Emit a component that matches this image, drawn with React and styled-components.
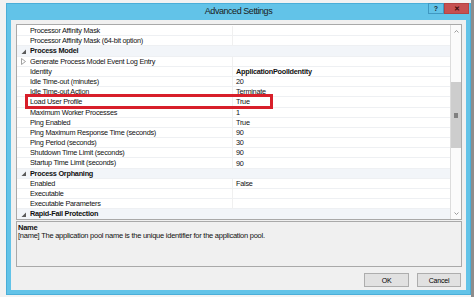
import React from 'react';
import styled, { createGlobalStyle } from 'styled-components';

const GlobalStyle = createGlobalStyle`
  html, body {
    margin: 0;
    padding: 0;
  }
  body {
    font-family: "Liberation Sans", Arial, sans-serif;
    color: #000;
  }
`;

const Page = styled.div`
  width: 474px;
  height: 297px;
  box-sizing: border-box;
  padding: 3px 0 0 6px;
  background: linear-gradient(to right, #f2f2f2 0, #f2f2f2 471px, #8d8d8d 471px);
  overflow: hidden;
`;

const Window = styled.div`
  width: 465px;
  height: 292px;
  box-sizing: border-box;
  display: flex;
  flex-direction: column;
  padding: 0 4px 4px 4px;
  background: #62c3e8;
  border: 1px solid #4aaed8;
`;

const TitleBar = styled.div`
  height: 16px;
  margin: 0 -4px;
  display: grid;
  grid-template-columns: 1fr auto 1fr;
  align-items: start;
`;

const Title = styled.div`
  grid-column: 2;
  font-size: 9px;
  letter-spacing: -0.45px;
  line-height: 15px;
  color: #1b1b1b;
`;

const Controls = styled.div`
  grid-column: 3;
  justify-self: end;
  display: flex;
  margin: -1px 1px 0 0;
`;

const CaptionButton = styled.div`
  height: 11px;
  width: ${(p) => p.$w}px;
  box-sizing: border-box;
  display: flex;
  align-items: center;
  justify-content: center;
  font-size: 7px;
  font-weight: bold;
  background: ${(p) => (p.$close ? '#c75050' : '#62c3e8')};
  border: 1px solid ${(p) => (p.$close ? '#b44444' : '#3f98c2')};
  color: ${(p) => (p.$close ? '#3a0d0d' : '#1b2a33')};
`;

const Client = styled.div`
  flex: 1;
  display: flex;
  flex-direction: column;
  padding: 4px 4px 3px 5px;
  background: #f0f0f0;
`;

const Grid = styled.div`
  position: relative;
  height: 196px;
  box-sizing: border-box;
  display: flex;
  background: #fff;
  border: 1px solid #a9a9a9;
`;

const Rows = styled.div`
  flex: 1;
  overflow: hidden;
  padding-top: 1px;
`;

const Row = styled.div`
  height: 10.2px;
  box-sizing: border-box;
  display: grid;
  grid-template-columns: 13px 203px 1fr;
  align-items: center;
  font-size: 7.3px;
  letter-spacing: -0.25px;
  line-height: 10px;
  white-space: nowrap;
  color: #111;
  background: ${(p) => (p.$category ? '#f2f5f9' : '#fff')};
  box-shadow: inset 0 -1px 0 #eef0f3;
`;

const Expander = styled.div`
  display: flex;
  align-items: center;
  padding-left: 4px;
  height: 100%;
`;

const Label = styled.div`
  font-weight: ${(p) => (p.$category ? 'bold' : 'normal')};
  height: 100%;
  border-right: 1px solid ${(p) => (p.$category ? 'transparent' : '#f0f0f0')};
  overflow: hidden;
`;

const Value = styled.div`
  padding-left: 3px;
  font-weight: ${(p) => (p.$bold ? 'bold' : 'normal')};
  overflow: hidden;
`;

const ScrollBar = styled.div`
  width: 10px;
  display: flex;
  flex-direction: column;
  background: #fbfbfb;
  border-left: 1px solid #dcdcdc;
`;

const ArrowButton = styled.div`
  height: 12px;
  display: flex;
  align-items: center;
  justify-content: center;
`;

const Track = styled.div`
  flex: ${(p) => p.$grow};
  flex-basis: ${(p) => p.$size}px;
`;

const Thumb = styled.div`
  height: 66px;
  background: #cdcdcd;
  display: flex;
  align-items: center;
  justify-content: center;
`;

const Grip = styled.div`
  width: 4px;
  height: 5px;
  background: #808080;
`;

const Highlight = styled.div`
  position: absolute;
  left: 8px;
  top: 69px;
  width: 248px;
  height: 15px;
  box-sizing: border-box;
  border: 3px solid #d81f2a;
  pointer-events: none;
`;

const Description = styled.div`
  margin-top: 1px;
  height: 46px;
  box-sizing: border-box;
  padding: 2px 1px;
  background: #f0f0f0;
  border: 1px solid #a9a9a9;
  font-size: 7.5px;
  letter-spacing: -0.25px;
  line-height: 8px;
  color: #111;
`;

const DescTitle = styled.div`
  font-weight: bold;
`;

const Footer = styled.div`
  margin-top: 6px;
  display: flex;
  justify-content: flex-end;
  gap: 8px;
  padding-right: 1px;
`;

const Button = styled.button`
  width: ${(p) => p.$w}px;
  height: 14px;
  padding: 0;
  box-sizing: border-box;
  font-family: "Liberation Sans", Arial, sans-serif;
  font-size: 7px;
  letter-spacing: -0.2px;
  color: #000;
  background: #e1e1e1;
  border: 1px solid #adadad;
`;

const ExpandedIcon = () => (
  <svg width="5" height="5" viewBox="0 0 5 5">
    <polygon points="5,0.5 5,5 0.5,5" fill="#5a5a5a" />
  </svg>
);

const CollapsedIcon = () => (
  <svg width="5" height="7" viewBox="0 0 5 7">
    <polygon points="0.5,0.5 4.5,3.5 0.5,6.5" fill="none" stroke="#8a8a8a" strokeWidth="0.8" />
  </svg>
);

const Chevron = ({ up }) => (
  <svg width="5" height="3" viewBox="0 0 5 3">
    <polyline
      points={up ? '0.5,2.5 2.5,0.5 4.5,2.5' : '0.5,0.5 2.5,2.5 4.5,0.5'}
      fill="none"
      stroke="#909090"
      strokeWidth="0.9"
    />
  </svg>
);

const rows = [
  { label: 'Processor Affinity Mask' },
  { label: 'Processor Affinity Mask (64-bit option)' },
  { label: 'Process Model', category: true },
  { label: 'Generate Process Model Event Log Entry', collapsed: true },
  { label: 'Identity', value: 'ApplicationPoolIdentity', bold: true },
  { label: 'Idle Time-out (minutes)', value: '20' },
  { label: 'Idle Time-out Action', value: 'Terminate' },
  { label: 'Load User Profile', value: 'True' },
  { label: 'Maximum Worker Processes', value: '1' },
  { label: 'Ping Enabled', value: 'True' },
  { label: 'Ping Maximum Response Time (seconds)', value: '90' },
  { label: 'Ping Period (seconds)', value: '30' },
  { label: 'Shutdown Time Limit (seconds)', value: '90' },
  { label: 'Startup Time Limit (seconds)', value: '90' },
  { label: 'Process Orphaning', category: true },
  { label: 'Enabled', value: 'False' },
  { label: 'Executable' },
  { label: 'Executable Parameters' },
  { label: 'Rapid-Fail Protection', category: true },
];

const App = () => {
  return (
    <>
      <GlobalStyle />
      <Page>
        <Window>
          <TitleBar>
            <Title>Advanced Settings</Title>
            <Controls>
              <CaptionButton $w={16}>?</CaptionButton>
              <CaptionButton $w={25} $close>✕</CaptionButton>
            </Controls>
          </TitleBar>
          <Client>
            <Grid>
              <Rows>
                {rows.map((r) => (
                  <Row key={r.label} $category={r.category}>
                    <Expander>
                      {r.category && <ExpandedIcon />}
                      {r.collapsed && <CollapsedIcon />}
                    </Expander>
                    <Label $category={r.category}>{r.label}</Label>
                    <Value $bold={r.bold}>{r.value}</Value>
                  </Row>
                ))}
              </Rows>
              <ScrollBar>
                <ArrowButton><Chevron up /></ArrowButton>
                <Track $size={45} $grow="0 0 auto" />
                <Thumb><Grip /></Thumb>
                <Track $size={0} $grow="1 1 0" />
                <ArrowButton><Chevron /></ArrowButton>
              </ScrollBar>
              <Highlight />
            </Grid>
            <Description>
              <DescTitle>Name</DescTitle>
              <div>[name] The application pool name is the unique identifier for the application pool.</div>
            </Description>
            <Footer>
              <Button $w={45}>OK</Button>
              <Button $w={44}>Cancel</Button>
            </Footer>
          </Client>
        </Window>
      </Page>
    </>
  );
};

export default App;
